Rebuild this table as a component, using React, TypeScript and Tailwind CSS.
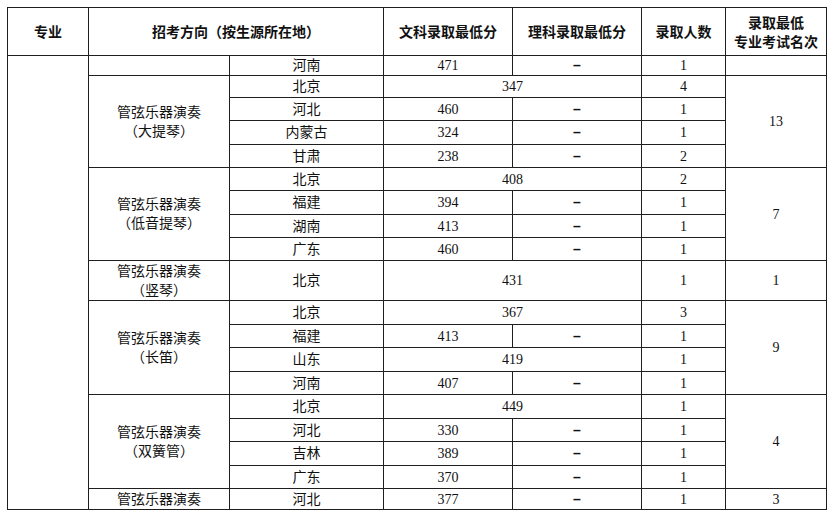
import React from "react";

// border + text style shared by every cell
const cell =
  "border border-[#1f1f1f] text-center align-middle p-0 leading-[19px] text-[14px] text-[#111]";
const head =
  "border border-[#1f1f1f] text-center align-middle p-0 leading-[19px] text-[14px] font-bold text-[#111] font-['Noto_Sans_CJK_SC',sans-serif]";

const Dash = () => (
  <span className="font-bold font-['Liberation_Sans',sans-serif]">–</span>
);

const Group = ({ name, sub }: { name: string; sub?: string }) => (
  <div className="flex flex-col items-center">
    <span>{name}</span>
    {sub && <span>{sub}</span>}
  </div>
);

type Row = {
  h: string;
  group?: { name: string; sub?: string; span: number };
  emptyGroup?: boolean;
  region: string;
  wen: string;
  li?: string; // undefined -> wen spans both columns
  count: string;
  rank?: { value: string; span: number };
  emptyRank?: boolean;
};

const rows: Row[] = [
  { h: "h-[20px]", emptyGroup: true, region: "河南", wen: "471", li: "-", count: "1", emptyRank: true },
  { h: "h-[22px]", group: { name: "管弦乐器演奏", sub: "（大提琴）", span: 4 }, region: "北京", wen: "347", count: "4", rank: { value: "13", span: 4 } },
  { h: "h-[23px]", region: "河北", wen: "460", li: "-", count: "1" },
  { h: "h-[24px]", region: "内蒙古", wen: "324", li: "-", count: "1" },
  { h: "h-[23px]", region: "甘肃", wen: "238", li: "-", count: "2" },
  { h: "h-[23px]", group: { name: "管弦乐器演奏", sub: "（低音提琴）", span: 4 }, region: "北京", wen: "408", count: "2", rank: { value: "7", span: 4 } },
  { h: "h-[24px]", region: "福建", wen: "394", li: "-", count: "1" },
  { h: "h-[23px]", region: "湖南", wen: "413", li: "-", count: "1" },
  { h: "h-[23px]", region: "广东", wen: "460", li: "-", count: "1" },
  { h: "h-[40px]", group: { name: "管弦乐器演奏", sub: "（竖琴）", span: 1 }, region: "北京", wen: "431", count: "1", rank: { value: "1", span: 1 } },
  { h: "h-[24px]", group: { name: "管弦乐器演奏", sub: "（长笛）", span: 4 }, region: "北京", wen: "367", count: "3", rank: { value: "9", span: 4 } },
  { h: "h-[23px]", region: "福建", wen: "413", li: "-", count: "1" },
  { h: "h-[24px]", region: "山东", wen: "419", count: "1" },
  { h: "h-[23px]", region: "河南", wen: "407", li: "-", count: "1" },
  { h: "h-[24px]", group: { name: "管弦乐器演奏", sub: "（双簧管）", span: 4 }, region: "北京", wen: "449", count: "1", rank: { value: "4", span: 4 } },
  { h: "h-[23px]", region: "河北", wen: "330", li: "-", count: "1" },
  { h: "h-[24px]", region: "吉林", wen: "389", li: "-", count: "1" },
  { h: "h-[23px]", region: "广东", wen: "370", li: "-", count: "1" },
  { h: "h-[21px]", group: { name: "管弦乐器演奏", span: 1 }, region: "河北", wen: "377", li: "-", count: "1", rank: { value: "3", span: 1 } },
];

export default function App() {
  return (
    <div className="w-[833px] h-[516px] bg-white overflow-hidden pt-[7px] pl-[7px] font-['Liberation_Serif','Noto_Sans_CJK_SC',serif]">
      <table className="border-collapse table-fixed w-[819px]">
        <colgroup>
          <col className="w-[81px]" />
          <col className="w-[141px]" />
          <col className="w-[154px]" />
          <col className="w-[129px]" />
          <col className="w-[129px]" />
          <col className="w-[84px]" />
          <col className="w-[101px]" />
        </colgroup>
        <thead>
          <tr className="h-[48px]">
            <th className={head}>专业</th>
            <th className={head} colSpan={2}>
              招考方向（按生源所在地）
            </th>
            <th className={head}>文科录取最低分</th>
            <th className={head}>理科录取最低分</th>
            <th className={head}>录取人数</th>
            <th className={head}>
              <div className="flex flex-col items-center">
                <span>录取最低</span>
                <span>专业考试名次</span>
              </div>
            </th>
          </tr>
        </thead>
        <tbody>
          {rows.map((r, i) => (
            <tr key={i} className={r.h}>
              {i === 0 && <td className={cell} rowSpan={rows.length} />}
              {r.emptyGroup && <td className={cell} />}
              {r.group && (
                <td className={cell} rowSpan={r.group.span}>
                  <Group name={r.group.name} sub={r.group.sub} />
                </td>
              )}
              <td className={cell}>{r.region}</td>
              {r.li === undefined ? (
                <td className={cell} colSpan={2}>
                  {r.wen}
                </td>
              ) : (
                <>
                  <td className={cell}>{r.wen}</td>
                  <td className={cell}>
                    <Dash />
                  </td>
                </>
              )}
              <td className={cell}>{r.count}</td>
              {r.emptyRank && <td className={cell} />}
              {r.rank && (
                <td className={cell} rowSpan={r.rank.span}>
                  {r.rank.value}
                </td>
              )}
            </tr>
          ))}
        </tbody>
      </table>
    </div>
  );
}
